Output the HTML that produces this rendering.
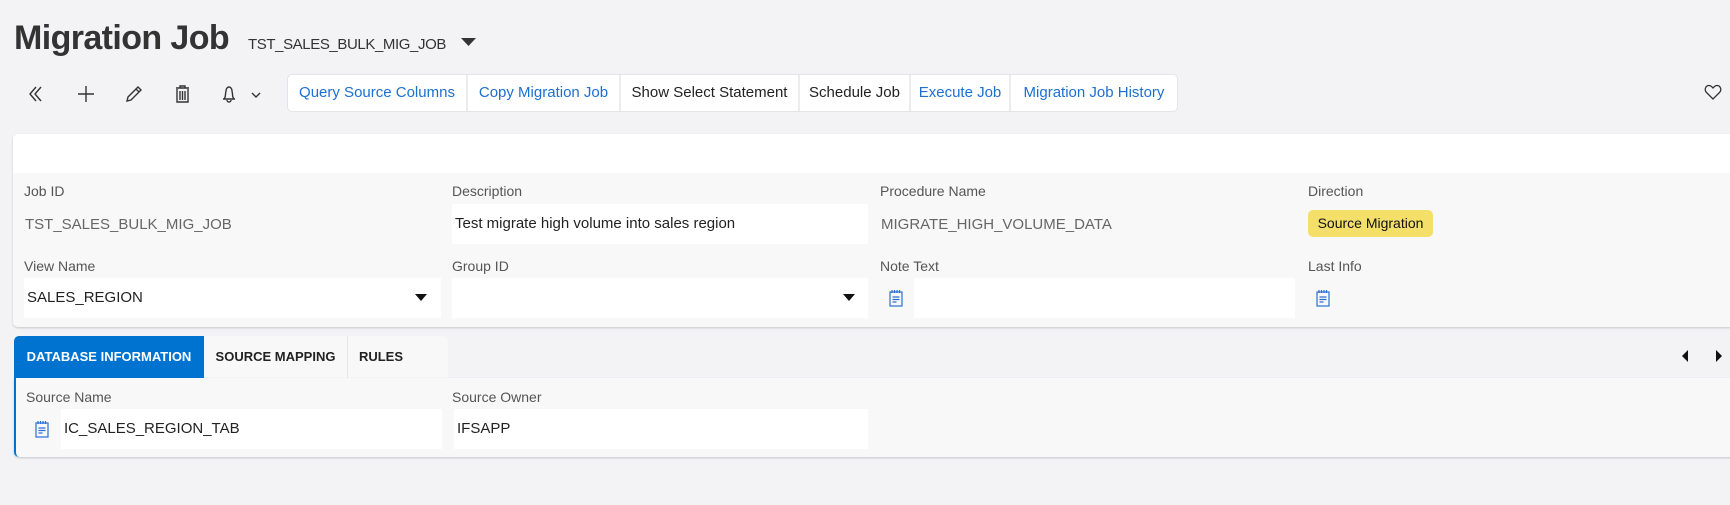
<!DOCTYPE html>
<html><head><meta charset="utf-8"><style>
*{box-sizing:border-box;margin:0;padding:0}
body{width:1730px;height:505px;background:#f3f2f5;font-family:"Liberation Sans",sans-serif;position:relative;overflow:hidden;color:#222}
.a{position:absolute}
.title{left:14px;top:19px;font-size:34px;font-weight:bold;color:#333;letter-spacing:-0.6px}
.sub{left:248px;top:36px;font-size:15px;color:#333;letter-spacing:-0.4px}
.btns{left:287px;top:74px;height:38px;width:891px;background:#fff;border-radius:5px;border:1px solid #e4e4e8}
.btn{position:absolute;top:0;height:36px;line-height:36px;font-size:15px;text-align:center;border-right:2px solid #ececef}
.blue{color:#1d6fd0}
.card{left:13px;top:134px;width:1730px;height:193px;background:#f8f8f8;border-radius:5px 0 0 5px;box-shadow:0 1px 2px rgba(0,0,0,.18)}
.strip{left:13px;top:134px;width:1730px;height:39px;background:#fff;border-radius:5px 0 0 0}
.lbl{font-size:14px;color:#555}
.val{font-size:15px;color:#666}
.inp{background:#fff;height:40px;line-height:40px;font-size:15px;color:#222;padding-left:3px}
.tabs{left:14px;top:336px;width:434px;height:42px;background:#f8f8f8;border-radius:5px 5px 0 0}
.tab{position:absolute;top:0;height:42px;line-height:42px;font-size:13px;font-weight:bold;color:#222;text-align:center}
.panel{left:14px;top:378px;width:1720px;height:79px;background:#f8f8f8;border-left:2px solid #0073d1;border-radius:0 0 0 5px;box-shadow:0 1px 2px rgba(0,0,0,.18)}
</style></head><body>
<div class="a title">Migration Job</div>
<div class="a sub">TST_SALES_BULK_MIG_JOB</div>
<svg class="a" style="left:461px;top:37px" width="16" height="10"><path d="M0 1h15l-7.5 8z" fill="#333"/></svg>

<svg class="a" style="left:26px;top:84px" width="240" height="20" fill="none" stroke="#333" stroke-width="1.4">
<path d="M10 3l-6 7 6 7M15 3l-6 7 6 7"/>
<path d="M60 2v16M52 10h16"/>
<path d="M101 17l1-4 10-10 3 3-10 10z M110 5l3 3"/>
<path d="M150 4h13M154 4v-2h5v2M151 5v13h11V5M154 7v9M156.5 7v9M159 7v9"/>
<path d="M197 15h12M198 15c2-2 1-4 2-8 0-3 2-4 3-4s3 1 3 4c1 4 0 6 2 8M201 16a2 2 0 0 0 4 0"/>
<path d="M226 9l4 4 4-4"/>
</svg>

<div class="a btns">
<div class="btn blue" style="left:0;width:180px">Query Source Columns</div>
<div class="btn blue" style="left:180px;width:153px">Copy Migration Job</div>
<div class="btn" style="left:333px;width:179px">Show Select Statement</div>
<div class="btn" style="left:512px;width:111px">Schedule Job</div>
<div class="btn blue" style="left:623px;width:100px">Execute Job</div>
<div class="btn blue" style="left:723px;width:166px;border-right:none">Migration Job History</div>
</div>
<svg class="a" style="left:1704px;top:84px" width="18" height="16" fill="none" stroke="#333" stroke-width="1.3"><path d="M9 15L2.5 8.5C0 6 1.5 1.5 5 1.5c2 0 3 1.3 4 2.5 1-1.2 2-2.5 4-2.5 3.5 0 5 4.5 2.5 7z"/></svg>

<div class="a card"></div>
<div class="a strip"></div>

<div class="a lbl" style="left:24px;top:183px">Job ID</div>
<div class="a val" style="left:25px;top:216px">TST_SALES_BULK_MIG_JOB</div>
<div class="a lbl" style="left:452px;top:183px">Description</div>
<div class="a inp" style="left:452px;top:204px;width:416px">Test migrate high volume into sales region</div>
<div class="a lbl" style="left:880px;top:183px">Procedure Name</div>
<div class="a val" style="left:881px;top:216px">MIGRATE_HIGH_VOLUME_DATA</div>
<div class="a lbl" style="left:1308px;top:183px">Direction</div>
<div class="a" style="left:1308px;top:210px;width:125px;height:27px;background:#f4df68;border-radius:5px;font-size:14px;line-height:27px;text-align:center;color:#111">Source Migration</div>

<div class="a lbl" style="left:24px;top:258px">View Name</div>
<div class="a inp" style="left:24px;top:278px;width:417px">SALES_REGION</div>
<svg class="a" style="left:415px;top:294px" width="12" height="8"><path d="M0 0h12l-6 7z" fill="#111"/></svg>
<div class="a lbl" style="left:452px;top:258px">Group ID</div>
<div class="a inp" style="left:452px;top:278px;width:416px"></div>
<svg class="a" style="left:843px;top:294px" width="12" height="8"><path d="M0 0h12l-6 7z" fill="#111"/></svg>
<div class="a lbl" style="left:880px;top:258px">Note Text</div>
<svg class="a" style="left:889px;top:289px" width="14" height="18" fill="none" stroke="#2b6fd4" stroke-width="1.2"><rect x="1" y="3" width="12" height="14"/><path d="M3 1v3M5.5 1v3M8 1v3M10.5 1v3M3.5 8h7M3.5 10.5h7M3.5 13h4"/></svg>
<div class="a inp" style="left:914px;top:278px;width:381px"></div>
<div class="a lbl" style="left:1308px;top:258px">Last Info</div>
<svg class="a" style="left:1316px;top:289px" width="14" height="18" fill="none" stroke="#2b6fd4" stroke-width="1.2"><rect x="1" y="3" width="12" height="14"/><path d="M3 1v3M5.5 1v3M8 1v3M10.5 1v3M3.5 8h7M3.5 10.5h7M3.5 13h4"/></svg>

<div class="a tabs">
<div class="tab" style="left:0;width:190px;background:#0073d1;color:#fff;border-radius:5px 0 0 0">DATABASE INFORMATION</div>
<div class="tab" style="left:190px;width:144px;border-right:1px solid #e6e6e6">SOURCE MAPPING</div>
<div class="tab" style="left:334px;width:66px">RULES</div>
</div>
<svg class="a" style="left:1680px;top:350px" width="44" height="13"><path d="M8 0v12l-6-6z" fill="#111"/><path d="M36 0v12l6-6z" fill="#111"/></svg>

<div class="a panel"></div>
<div class="a lbl" style="left:26px;top:389px">Source Name</div>
<svg class="a" style="left:35px;top:420px" width="14" height="18" fill="none" stroke="#2b6fd4" stroke-width="1.2"><rect x="1" y="3" width="12" height="14"/><path d="M3 1v3M5.5 1v3M8 1v3M10.5 1v3M3.5 8h7M3.5 10.5h7M3.5 13h4"/></svg>
<div class="a inp" style="left:61px;top:409px;width:381px">IC_SALES_REGION_TAB</div>
<div class="a lbl" style="left:452px;top:389px">Source Owner</div>
<div class="a inp" style="left:454px;top:409px;width:414px">IFSAPP</div>
</body></html>
